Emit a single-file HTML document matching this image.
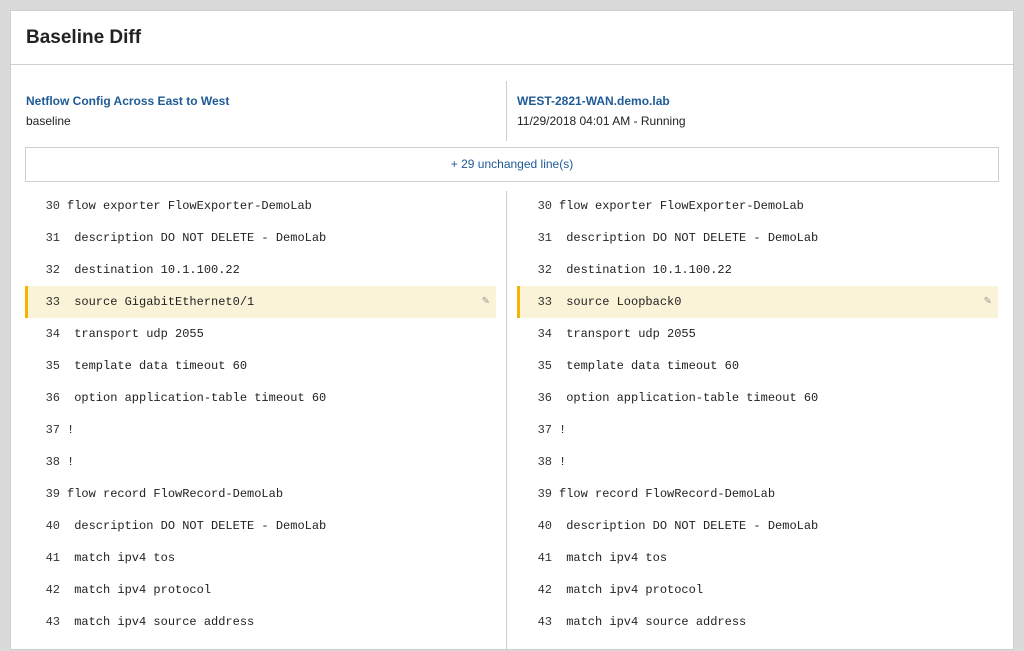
<!DOCTYPE html>
<html><head><style>
body{margin:0;background:#dadada;font-family:"Liberation Sans",sans-serif;width:1024px;height:640px;overflow:hidden}
.card{position:absolute;left:10px;top:10px;width:1004px;height:640px;background:#fff;border:1px solid #cfcfcf;box-sizing:border-box}
h1{margin:0;position:absolute;left:15px;top:16px;font-size:19px;font-weight:bold;color:#222}
.hr{position:absolute;left:0;right:0;top:53px;border-top:1px solid #cfcfcf}
.vd{position:absolute;left:495px;width:1px;background:#cfcfcf}
.t{position:absolute;font-size:12px;color:#222}
.t b{color:#1f5a96;display:block;margin-bottom:6px}
.unch{position:absolute;left:14px;top:136px;width:974px;height:35px;border:1px solid #cfcfcf;box-sizing:border-box;text-align:center;line-height:33px;font-size:12px;color:#1f5a96}
.col{position:absolute;top:179px}
.r{height:32px;line-height:32px;font-family:"Liberation Mono",monospace;font-size:12px;color:#222;white-space:pre;position:relative}
.r .n{display:inline-block;width:35px;text-align:right;margin-right:7px;color:#333}
.r.h{background:#faf3d8;border-left:3px solid #f5b400;margin-left:0}
.r.h .n{width:32px}
.pen{position:absolute;right:6px;top:0;color:#999;font-size:10px;font-family:"DejaVu Sans",sans-serif}
</style></head><body>
<div class="card">
<h1>Baseline Diff</h1>
<div class="hr"></div>
<div class="vd" style="top:70px;height:60px"></div>
<div class="vd" style="top:180px;height:460px"></div>
<div class="t" style="left:15px;top:83px"><b>Netflow Config Across East to West</b>baseline</div>
<div class="t" style="left:506px;top:83px"><b>WEST-2821-WAN.demo.lab</b>11/29/2018 04:01 AM - Running</div>
<div class="unch">+ 29 unchanged line(s)</div>
<div class="col" style="left:14px;width:471px">
<div class="r"><span class="n">30</span>flow exporter FlowExporter-DemoLab</div>
<div class="r"><span class="n">31</span> description DO NOT DELETE - DemoLab</div>
<div class="r"><span class="n">32</span> destination 10.1.100.22</div>
<div class="r h"><span class="n">33</span> source GigabitEthernet0/1<span class="pen">✎</span></div>
<div class="r"><span class="n">34</span> transport udp 2055</div>
<div class="r"><span class="n">35</span> template data timeout 60</div>
<div class="r"><span class="n">36</span> option application-table timeout 60</div>
<div class="r"><span class="n">37</span>!</div>
<div class="r"><span class="n">38</span>!</div>
<div class="r"><span class="n">39</span>flow record FlowRecord-DemoLab</div>
<div class="r"><span class="n">40</span> description DO NOT DELETE - DemoLab</div>
<div class="r"><span class="n">41</span> match ipv4 tos</div>
<div class="r"><span class="n">42</span> match ipv4 protocol</div>
<div class="r"><span class="n">43</span> match ipv4 source address</div>
</div>
<div class="col" style="left:506px;width:481px">
<div class="r"><span class="n">30</span>flow exporter FlowExporter-DemoLab</div>
<div class="r"><span class="n">31</span> description DO NOT DELETE - DemoLab</div>
<div class="r"><span class="n">32</span> destination 10.1.100.22</div>
<div class="r h"><span class="n">33</span> source Loopback0<span class="pen">✎</span></div>
<div class="r"><span class="n">34</span> transport udp 2055</div>
<div class="r"><span class="n">35</span> template data timeout 60</div>
<div class="r"><span class="n">36</span> option application-table timeout 60</div>
<div class="r"><span class="n">37</span>!</div>
<div class="r"><span class="n">38</span>!</div>
<div class="r"><span class="n">39</span>flow record FlowRecord-DemoLab</div>
<div class="r"><span class="n">40</span> description DO NOT DELETE - DemoLab</div>
<div class="r"><span class="n">41</span> match ipv4 tos</div>
<div class="r"><span class="n">42</span> match ipv4 protocol</div>
<div class="r"><span class="n">43</span> match ipv4 source address</div>
</div>
</div>
</body></html>
